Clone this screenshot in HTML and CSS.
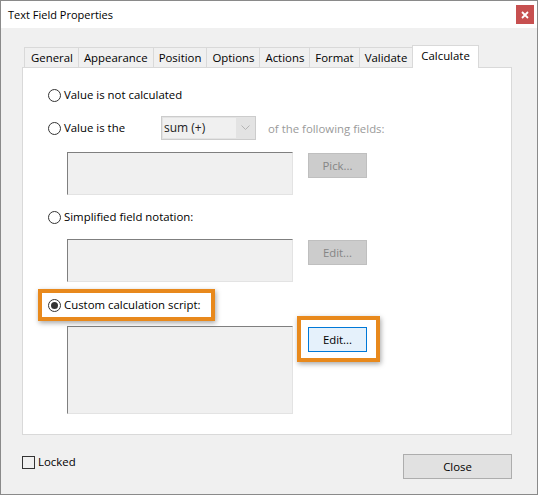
FILE: index.html
```html
<!DOCTYPE html>
<html lang="en">
<head>
<meta charset="utf-8">
<title>Text Field Properties</title>
<link rel="stylesheet" href="styles.css">
</head>
<body>
<div class="window">
  <div class="titlebar">
    <span class="title">Text Field Properties</span>
    <div class="win-close">
      <svg width="8" height="8" viewBox="0 0 8 8"><path d="M1 1L7 7M7 1L1 7" stroke="#fff" stroke-width="1.8" fill="none"/></svg>
    </div>
  </div>
  <div class="main">
    <div class="tabs">
      <div class="tab first">General</div>
      <div class="tab">Appearance</div>
      <div class="tab">Position</div>
      <div class="tab">Options</div>
      <div class="tab">Actions</div>
      <div class="tab">Format</div>
      <div class="tab">Validate</div>
      <div class="tab active">Calculate</div>
    </div>
    <div class="panel">
      <div class="radio-row r1"><span class="radio"></span><span>Value is not calculated</span></div>
      <div class="sel-row r2">
        <div class="radio-row fixed"><span class="radio"></span><span>Value is the</span></div>
        <div class="select">
          <span class="select-value">sum (+)</span>
          <span class="select-arrow"><svg width="9" height="6" viewBox="0 0 9 6"><path d="M0.5 0.5L4.5 4.5L8.5 0.5" stroke="#b4b4b4" fill="none"/></svg></span>
        </div>
        <span class="muted">of the following fields:</span>
      </div>
      <div class="field-row f1">
        <div class="textbox"></div>
        <div class="btn disabled">Pick...</div>
      </div>
      <div class="radio-row r3"><span class="radio"></span><span>Simplified field notation:</span></div>
      <div class="field-row f2">
        <div class="textbox"></div>
        <div class="btn disabled">Edit...</div>
      </div>
      <div class="radio-row r4"><span class="radio checked"></span><span>Custom calculation script:</span><span class="annot annot-radio"></span></div>
      <div class="field-row f3">
        <div class="textbox tall"></div>
        <div class="btn focus">Edit...<span class="annot annot-btn"></span></div>
      </div>
    </div>
    <div class="footer">
      <div class="check-row"><span class="check"></span><span>Locked</span></div>
      <div class="btn-close">Close</div>
    </div>
  </div>
</div>
</body>
</html>
```

FILE: styles.css
```css
* { box-sizing: border-box; }

body {
  margin: 0;
  background: #ffffff;
  font-family: "Open Sans", "Segoe UI", sans-serif;
  font-size: 11.4px;
  color: #000;
}

.window {
  width: 538px;
  height: 495px;
  border: 1px solid #8a8a8a;
  background: #f0f0f0;
  display: flex;
  flex-direction: column;
}

.titlebar {
  height: 27px;
  background: #fff;
  display: flex;
  align-items: center;
  justify-content: space-between;
  padding: 0 3px 0 7px;
}

.title { font-size: 11px; }

.win-close {
  width: 18px;
  height: 19px;
  background: #c75050;
  display: flex;
  align-items: center;
  justify-content: center;
}

.main {
  padding: 17px 25px 15px 21px;
  display: flex;
  flex-direction: column;
}

.tabs {
  display: flex;
  align-items: flex-end;
  height: 23px;
  margin: 0 0 -1px 2px;
  position: relative;
  z-index: 1;
}

.tab {
  height: 20px;
  margin-bottom: 1px;
  padding: 0 5px;
  border: 1px solid #d9d9d9;
  border-left: none;
  border-bottom: none;
  background: #f0f0f0;
  display: flex;
  align-items: center;
  line-height: 16px;
}

.tab.first {
  border-left: 1px solid #d9d9d9;
  padding-left: 6px;
}

.tab.active {
  height: 23px;
  margin-bottom: 0;
  margin-left: -1px;
  padding: 0 8px 3px;
  border-left: 1px solid #d9d9d9;
  background: #fff;
}

.panel {
  background: #fff;
  border: 1px solid #d9d9d9;
  padding: 19px 0 20px 25px;
  display: flex;
  flex-direction: column;
  align-items: flex-start;
}

.radio-row {
  display: flex;
  align-items: center;
  gap: 3px;
  height: 16px;
  line-height: 16px;
  position: relative;
}

.radio {
  width: 13px;
  height: 13px;
  border: 1px solid #333;
  border-radius: 50%;
  background: #fff;
  flex: none;
  display: flex;
  align-items: center;
  justify-content: center;
}

.radio.checked::after {
  content: "";
  width: 7px;
  height: 7px;
  border-radius: 50%;
  background: #333;
}

.sel-row {
  display: flex;
  align-items: center;
  height: 24px;
}

.radio-row.fixed { width: 113px; }

.select {
  width: 95px;
  height: 24px;
  border: 1px solid #cccccc;
  background: #e3e3e3;
  padding: 1px;
  display: flex;
}

.select-value {
  flex: 1;
  background: #f0f0f0;
  padding-left: 1px;
  line-height: 20px;
  color: #222;
  font-size: 12px;
}

.select-arrow {
  width: 18px;
  display: flex;
  align-items: center;
  justify-content: center;
}

.muted {
  color: #9a9a9a;
  margin-left: 12px;
}

.field-row {
  display: flex;
  align-items: flex-start;
  gap: 15px;
  margin-left: 19px;
}

.textbox {
  width: 226px;
  height: 43px;
  border: 1px solid;
  border-color: #7f7f7f #e3e3e3 #e3e3e3 #7f7f7f;
  background: #f0f0f0;
}

.textbox.tall { height: 88px; }

.btn {
  width: 59px;
  height: 25px;
  margin-top: 1px;
  display: flex;
  align-items: center;
  justify-content: center;
  position: relative;
}

.btn.disabled {
  background: #cccccc;
  border: 1px solid #bfbfbf;
  color: #858585;
}

.btn.focus {
  background: #e5f1fb;
  border: 1px solid #0078d7;
}

.r2 { margin-top: 13px; }
.f1 { margin-top: 12px; }
.r3 { margin-top: 14px; }
.f2 { margin-top: 14px; }
.r4 { margin-top: 15px; }
.f3 { margin-top: 13px; }

.annot {
  position: absolute;
  border: 4px solid #e8891c;
  box-shadow: 1px 2px 5px rgba(0, 0, 0, 0.35);
  pointer-events: none;
}

.annot-radio { top: -8px; bottom: -8px; left: -10px; right: -15px; }
.annot-btn { top: -12px; bottom: -11px; left: -12px; right: -14px; }

.footer {
  margin-top: 19px;
  display: flex;
  justify-content: space-between;
  align-items: flex-start;
}

.check-row {
  display: flex;
  align-items: center;
  gap: 3px;
  height: 16px;
  line-height: 16px;
}

.check {
  width: 13px;
  height: 13px;
  border: 1px solid #333;
}

.btn-close {
  width: 109px;
  height: 25px;
  background: #e1e1e1;
  border: 1px solid #adadad;
  display: flex;
  align-items: center;
  justify-content: center;
}
```
